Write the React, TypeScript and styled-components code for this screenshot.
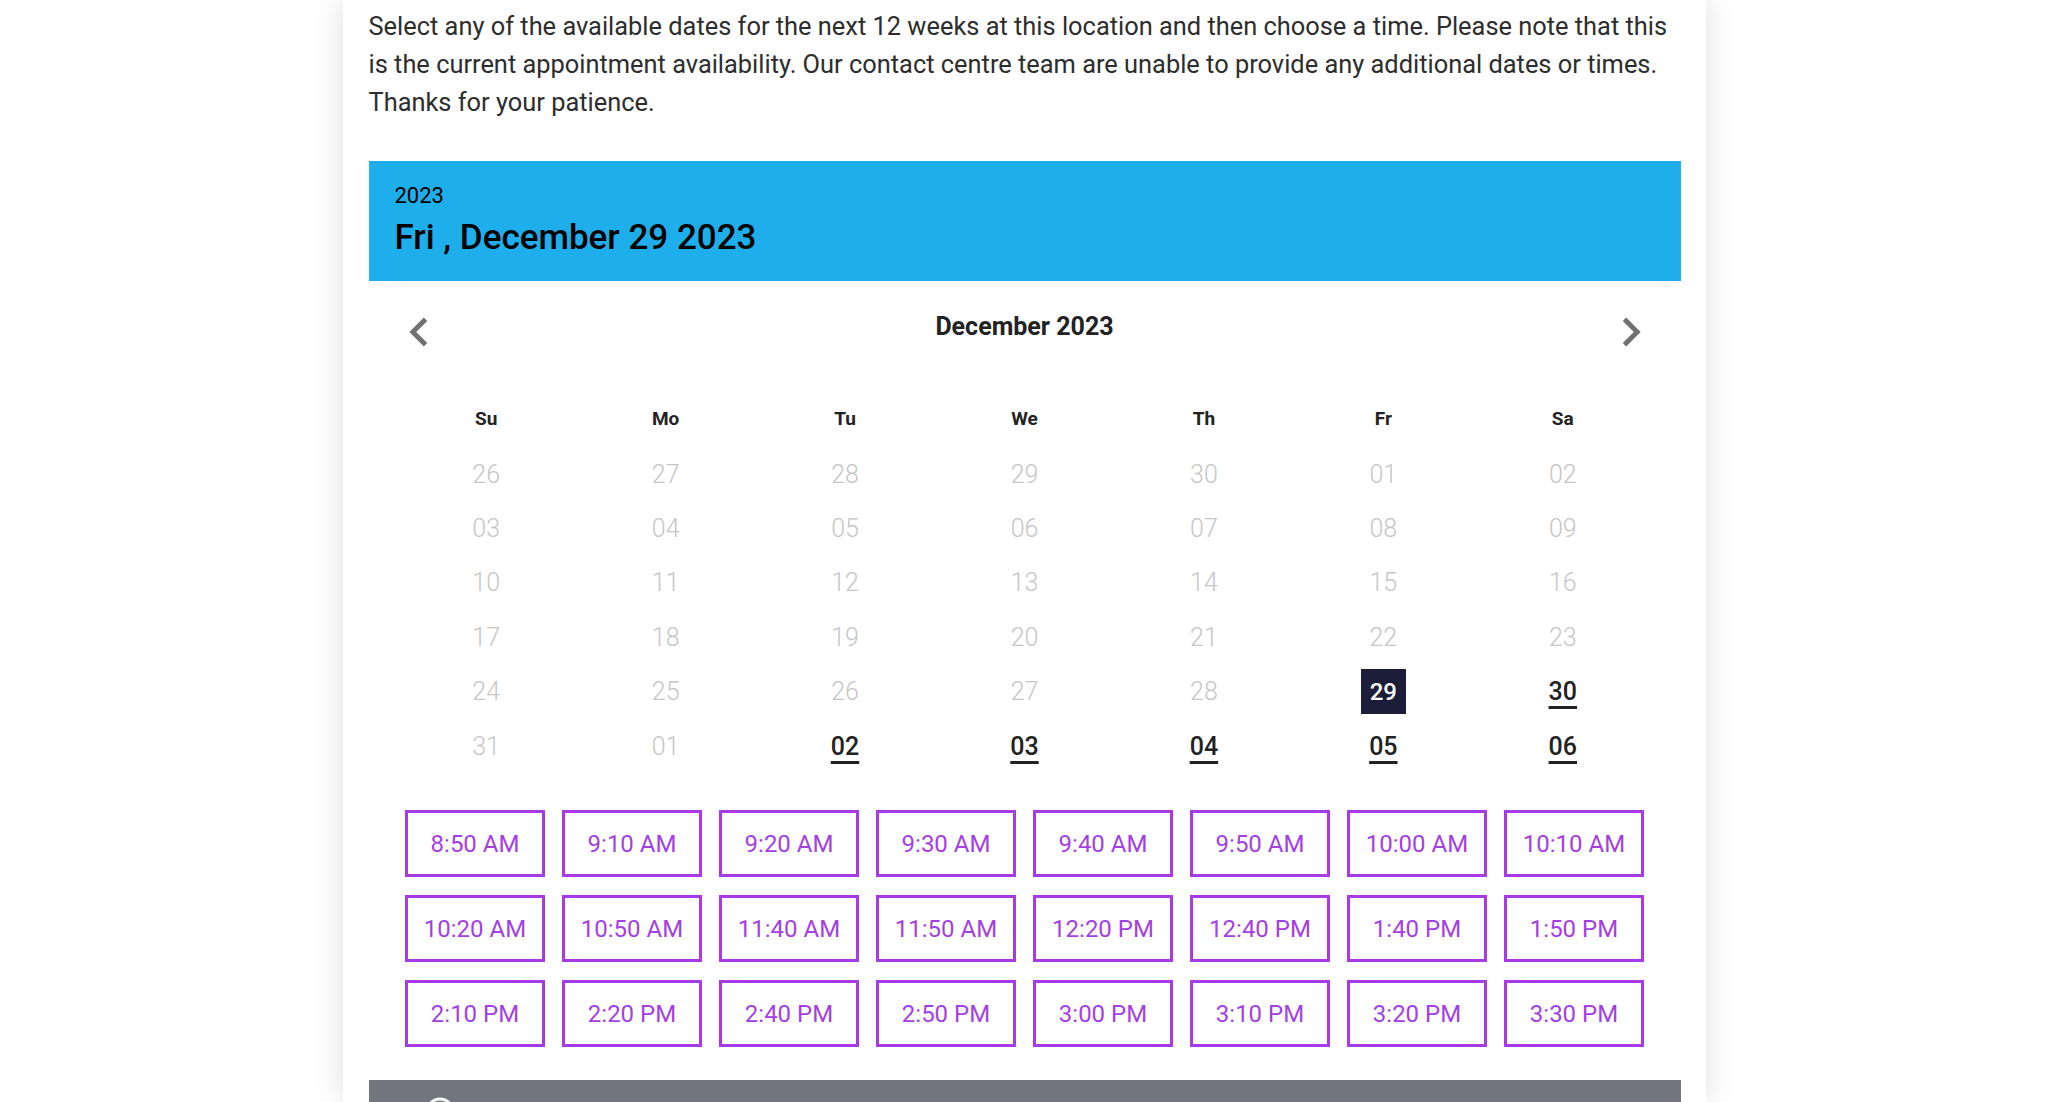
import React from 'react';
import styled, { createGlobalStyle } from 'styled-components';

const GlobalStyle = createGlobalStyle`
  html, body {
    margin: 0;
    padding: 0;
    background: #fff;
  }
  body {
    font-family: Roboto, "Liberation Sans", Arial, sans-serif;
    overflow: hidden;
  }
`;

const Page = styled.div`
  height: 1102px;
  overflow: hidden;
  display: flex;
  justify-content: center;
`;

const Card = styled.main`
  width: 1363px;
  box-sizing: border-box;
  padding: 7px 25px 0 26px;
  background: #fff;
  box-shadow: 0 0 30px rgba(0, 0, 0, 0.13);
`;

const Intro = styled.p`
  margin: 0;
  font-size: 25.4px;
  line-height: 38px;
  color: #2d2d2d;
`;

const DateHeader = styled.header`
  margin-top: 40px;
  height: 120px;
  box-sizing: border-box;
  padding: 22px 26px 0;
  background: #1eaeeb;
  color: #000;
`;

const HeaderYear = styled.div`
  font-size: 22px;
  line-height: 26px;
  margin-bottom: 9px;
`;

const HeaderTitle = styled.div`
  font-size: 35px;
  line-height: 40px;
  font-weight: 500;
`;

const MonthNav = styled.div`
  margin-top: 22px;
  height: 58px;
  padding: 0 21px;
  display: flex;
  align-items: center;
  justify-content: space-between;
`;

const NavButton = styled.button`
  width: 58px;
  height: 58px;
  padding: 0;
  border: none;
  background: none;
  display: flex;
  align-items: center;
  justify-content: center;
  color: #717171;
  cursor: pointer;
`;

const MonthTitle = styled.div`
  margin-bottom: 12px;
  font-size: 25px;
  font-weight: 700;
  color: #222;
`;

const DayGrid = styled.div`
  margin-top: 28px;
  padding: 0 28px;
  display: grid;
  grid-template-columns: repeat(7, 1fr);
  grid-template-rows: 58px repeat(6, 54.4px);
`;

const WeekDay = styled.div`
  display: flex;
  align-items: center;
  justify-content: center;
  font-size: 19px;
  font-weight: 700;
  color: #222;
`;

const DayCell = styled.div`
  display: flex;
  align-items: center;
  justify-content: center;
`;

type DayState = 'muted' | 'open' | 'selected';

const DayNumber = styled.span<{ $state: DayState }>`
  font-size: ${p => (p.$state === 'selected' ? '24px' : '25px')};
  font-weight: ${p => (p.$state === 'muted' ? 300 : 500)};
  color: ${p => (p.$state === 'muted' ? '#c6c6c6' : p.$state === 'selected' ? '#fff' : '#222')};
  background: ${p => (p.$state === 'selected' ? '#1c1d38' : 'transparent')};
  width: ${p => (p.$state === 'selected' ? '45px' : 'auto')};
  height: ${p => (p.$state === 'selected' ? '45px' : 'auto')};
  display: inline-flex;
  align-items: center;
  justify-content: center;
  text-decoration: ${p => (p.$state === 'open' ? 'underline' : 'none')};
  text-decoration-thickness: 3px;
  text-underline-offset: 6px;
  cursor: ${p => (p.$state === 'muted' ? 'default' : 'pointer')};
`;

const TimeGrid = styled.div`
  margin-top: 37px;
  display: grid;
  grid-template-columns: repeat(8, 140px);
  grid-auto-rows: 67px;
  column-gap: 17px;
  row-gap: 18px;
  justify-content: center;
`;

const TimeButton = styled.button`
  box-sizing: border-box;
  border: 3px solid #a83ae8;
  background: #fff;
  color: #a43fe4;
  font-family: inherit;
  font-size: 24px;
  cursor: pointer;
`;

const FooterBar = styled.div`
  margin-top: 33px;
  height: 60px;
  background: #72757e;
  padding: 17px 0 0 56px;
  box-sizing: border-box;
`;

const Chevron = ({ dir }: { dir: 'left' | 'right' }) => (
  <svg width="58" height="58" viewBox="0 0 24 24" fill="currentColor">
    {dir === 'left' ? (
      <path d="M15.41 7.41L14 6l-6 6 6 6 1.41-1.41L10.83 12z" />
    ) : (
      <path d="M10 6L8.59 7.41 13.17 12l-4.58 4.59L10 18l6-6z" />
    )}
  </svg>
);

const weekDays = ['Su', 'Mo', 'Tu', 'We', 'Th', 'Fr', 'Sa'];

const weeks: [string, DayState][][] = [
  ['26', '27', '28', '29', '30', '01', '02'].map(d => [d, 'muted']),
  ['03', '04', '05', '06', '07', '08', '09'].map(d => [d, 'muted']),
  ['10', '11', '12', '13', '14', '15', '16'].map(d => [d, 'muted']),
  ['17', '18', '19', '20', '21', '22', '23'].map(d => [d, 'muted']),
  [
    ['24', 'muted'], ['25', 'muted'], ['26', 'muted'], ['27', 'muted'],
    ['28', 'muted'], ['29', 'selected'], ['30', 'open'],
  ],
  [
    ['31', 'muted'], ['01', 'muted'], ['02', 'open'], ['03', 'open'],
    ['04', 'open'], ['05', 'open'], ['06', 'open'],
  ],
];

const times = [
  '8:50 AM', '9:10 AM', '9:20 AM', '9:30 AM', '9:40 AM', '9:50 AM', '10:00 AM', '10:10 AM',
  '10:20 AM', '10:50 AM', '11:40 AM', '11:50 AM', '12:20 PM', '12:40 PM', '1:40 PM', '1:50 PM',
  '2:10 PM', '2:20 PM', '2:40 PM', '2:50 PM', '3:00 PM', '3:10 PM', '3:20 PM', '3:30 PM',
];

const App: React.FC = () => {
  return (
    <>
      <GlobalStyle />
      <Page>
        <Card>
          <Intro>
            Select any of the available dates for the next 12 weeks at this location and then choose a time.
            Please note that this is the current appointment availability. Our contact centre team are unable
            to provide any additional dates or times. Thanks for your patience.
          </Intro>

          <DateHeader>
            <HeaderYear>2023</HeaderYear>
            <HeaderTitle>Fri , December 29 2023</HeaderTitle>
          </DateHeader>

          <MonthNav>
            <NavButton aria-label="Previous month">
              <Chevron dir="left" />
            </NavButton>
            <MonthTitle>December 2023</MonthTitle>
            <NavButton aria-label="Next month">
              <Chevron dir="right" />
            </NavButton>
          </MonthNav>

          <DayGrid>
            {weekDays.map(d => (
              <WeekDay key={d}>{d}</WeekDay>
            ))}
            {weeks.map((week, wi) =>
              week.map(([day, state], di) => (
                <DayCell key={`${wi}-${di}`}>
                  <DayNumber $state={state}>{day}</DayNumber>
                </DayCell>
              ))
            )}
          </DayGrid>

          <TimeGrid>
            {times.map(t => (
              <TimeButton key={t}>{t}</TimeButton>
            ))}
          </TimeGrid>

          <FooterBar>
            <svg width="30" height="30" viewBox="0 0 30 30">
              <circle cx="15" cy="15" r="13" fill="none" stroke="#fff" strokeWidth="3" />
            </svg>
          </FooterBar>
        </Card>
      </Page>
    </>
  );
};

export default App;
